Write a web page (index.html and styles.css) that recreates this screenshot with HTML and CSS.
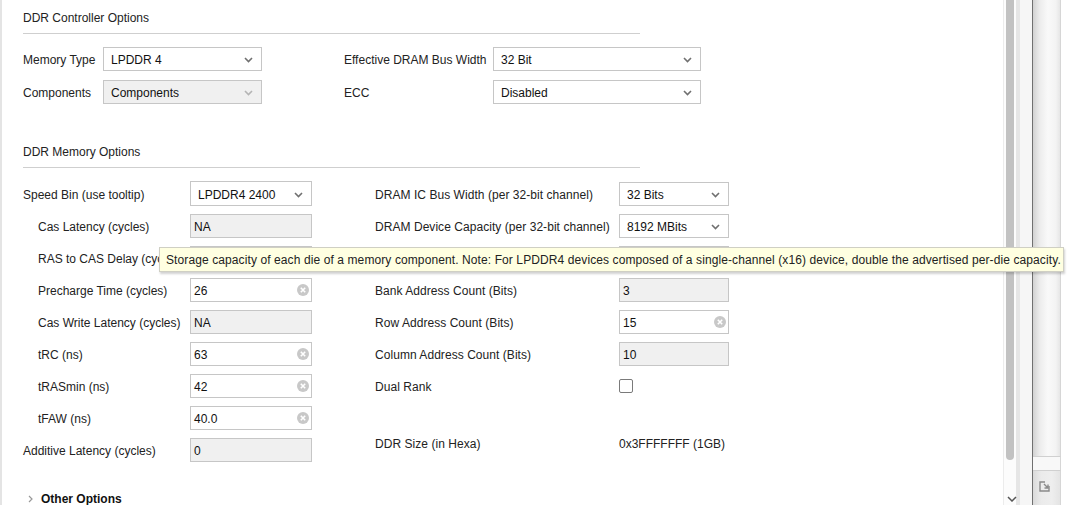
FILE: index.html
```html
<!DOCTYPE html>
<html>
<head>
<meta charset="utf-8">
<link rel="stylesheet" href="styles.css">
</head>
<body>
<div class="app">
  <div class="main">
    <section class="group">
      <div class="group-title">DDR Controller Options</div>
      <div class="ctrl-grid">
        <div class="field-label">Memory Type</div>
        <div class="select"><span>LPDDR 4</span><svg class="chev" viewBox="0 0 9 6"><path d="M1 1 L4.5 4.5 L8 1"/></svg></div>
        <div></div>
        <div class="field-label">Effective DRAM Bus Width</div>
        <div class="select"><span>32 Bit</span><svg class="chev" viewBox="0 0 9 6"><path d="M1 1 L4.5 4.5 L8 1"/></svg></div>

        <div class="field-label">Components</div>
        <div class="select disabled"><span>Components</span><svg class="chev" viewBox="0 0 9 6"><path d="M1 1 L4.5 4.5 L8 1"/></svg></div>
        <div></div>
        <div class="field-label">ECC</div>
        <div class="select"><span>Disabled</span><svg class="chev" viewBox="0 0 9 6"><path d="M1 1 L4.5 4.5 L8 1"/></svg></div>
      </div>
    </section>

    <section class="group group-mem">
      <div class="group-title">DDR Memory Options</div>
      <div class="mem">
        <div class="mem-left">
          <div class="row first">
            <div class="lbl">Speed Bin (use tooltip)</div>
            <div class="select sel-left"><span>LPDDR4 2400</span><svg class="chev" viewBox="0 0 9 6"><path d="M1 1 L4.5 4.5 L8 1"/></svg></div>
          </div>
          <div class="row">
            <div class="lbl ind">Cas Latency (cycles)</div>
            <div class="input disabled">NA</div>
          </div>
          <div class="row">
            <div class="lbl ind">RAS to CAS Delay (cycles)</div>
            <div class="input"></div>
          </div>
          <div class="row">
            <div class="lbl ind">Precharge Time (cycles)</div>
            <div class="input">26<svg class="clear" viewBox="0 0 12 12"><circle cx="6" cy="6" r="6"/><path d="M3.8 3.8 L8.2 8.2 M8.2 3.8 L3.8 8.2"/></svg></div>
          </div>
          <div class="row">
            <div class="lbl ind">Cas Write Latency (cycles)</div>
            <div class="input disabled">NA</div>
          </div>
          <div class="row">
            <div class="lbl ind">tRC (ns)</div>
            <div class="input">63<svg class="clear" viewBox="0 0 12 12"><circle cx="6" cy="6" r="6"/><path d="M3.8 3.8 L8.2 8.2 M8.2 3.8 L3.8 8.2"/></svg></div>
          </div>
          <div class="row">
            <div class="lbl ind">tRASmin (ns)</div>
            <div class="input">42<svg class="clear" viewBox="0 0 12 12"><circle cx="6" cy="6" r="6"/><path d="M3.8 3.8 L8.2 8.2 M8.2 3.8 L3.8 8.2"/></svg></div>
          </div>
          <div class="row">
            <div class="lbl ind">tFAW (ns)</div>
            <div class="input">40.0<svg class="clear" viewBox="0 0 12 12"><circle cx="6" cy="6" r="6"/><path d="M3.8 3.8 L8.2 8.2 M8.2 3.8 L3.8 8.2"/></svg></div>
          </div>
          <div class="row">
            <div class="lbl">Additive Latency (cycles)</div>
            <div class="input disabled">0</div>
          </div>
        </div>

        <div class="mem-right">
          <div class="row first">
            <div class="rlbl">DRAM IC Bus Width (per 32-bit channel)</div>
            <div class="select sel-right"><span>32 Bits</span><svg class="chev" viewBox="0 0 9 6"><path d="M1 1 L4.5 4.5 L8 1"/></svg></div>
          </div>
          <div class="row">
            <div class="rlbl">DRAM Device Capacity (per 32-bit channel)</div>
            <div class="select sel-right"><span>8192 MBits</span><svg class="chev" viewBox="0 0 9 6"><path d="M1 1 L4.5 4.5 L8 1"/></svg></div>
          </div>
          <div class="row">
            <div class="rlbl"></div>
            <div class="input rin disabled"></div>
          </div>
          <div class="row">
            <div class="rlbl">Bank Address Count (Bits)</div>
            <div class="input rin disabled">3</div>
          </div>
          <div class="row">
            <div class="rlbl">Row Address Count (Bits)</div>
            <div class="input rin">15<svg class="clear" viewBox="0 0 12 12"><circle cx="6" cy="6" r="6"/><path d="M3.8 3.8 L8.2 8.2 M8.2 3.8 L3.8 8.2"/></svg></div>
          </div>
          <div class="row">
            <div class="rlbl">Column Address Count (Bits)</div>
            <div class="input rin disabled">10</div>
          </div>
          <div class="row">
            <div class="rlbl">Dual Rank</div>
            <div class="checkbox"></div>
          </div>
          <div class="row size-row">
            <div class="rlbl">DDR Size (in Hexa)</div>
            <div class="value">0x3FFFFFFF (1GB)</div>
          </div>
        </div>
      </div>
    </section>

    <div class="other">
      <svg class="other-chev" viewBox="0 0 5 8"><path d="M1 1 L4 4 L1 7"/></svg>
      <span>Other Options</span>
    </div>
  </div>

  <div class="vscroll">
    <div class="thumb"></div>
    <svg class="down" viewBox="0 0 10 6"><path d="M1 1 L5 5 L9 1"/></svg>
  </div>
  <div class="strip"></div>
  <div class="gutter"></div>
  <div class="divider"></div>
  <div class="side">
    <div class="side-top"></div>
    <div class="side-gap"></div>
    <div class="side-bottom">
      <svg class="popout" viewBox="0 0 11 11"><path d="M6 1 H1 V10 H10 V5"/><path d="M5 3 L9 7 M9 3.5 V7 H5.5"/></svg>
    </div>
  </div>
  <div class="edge"></div>

  <div class="tooltip">Storage capacity of each die of a memory component. Note: For LPDDR4 devices composed of a single-channel (x16) device, double the advertised per-die capacity.</div>
</div>
</body>
</html>
```

FILE: styles.css
```css
* { box-sizing: border-box; }
html, body { margin: 0; padding: 0; background: #fff; }
body {
  font-family: "Liberation Sans", Arial, sans-serif;
  font-size: 12px;
  color: #222;
  width: 1069px;
  height: 505px;
  overflow: hidden;
}
.app {
  position: relative;
  display: flex;
  height: 505px;
}
.main {
  width: 1003px;
  flex: none;
  border-left: 2px solid #e4e4e4;
  padding-left: 21px;
}
.group-title {
  width: 617px;
  padding: 11px 0 8px;
  line-height: 14px;
  border-bottom: 1px solid #cfcfcf;
}
.ctrl-grid {
  display: grid;
  grid-template-columns: 80px 159px 82px 149px 208px;
  grid-auto-rows: 24px;
  row-gap: 9px;
  margin-top: 13px;
}
.field-label {
  display: flex;
  align-items: center;
  white-space: nowrap;
  padding-top: 2px;
}
.select {
  display: flex;
  align-items: center;
  justify-content: space-between;
  border: 1px solid #c6c6c6;
  background: #fff;
  padding: 2px 8px 0 7px;
  color: #111;
}
.select.disabled { background: #f0f0f0; }
.chev {
  width: 9px;
  height: 6px;
  fill: none;
  stroke: #707070;
  stroke-width: 1.6;
}
.select.disabled .chev { stroke: #b4b4b4; }

.group-mem { margin-top: 30px; }
.mem {
  display: flex;
  margin-top: 13px;
}
.mem-left {
  width: 289px;
  display: flex;
  flex-direction: column;
  gap: 8px;
}
.mem-right {
  width: 354px;
  margin-left: 63px;
  display: flex;
  flex-direction: column;
  gap: 8px;
}
.row {
  display: flex;
  align-items: center;
  height: 24px;
}
.row.first { height: 25px; }
.lbl {
  width: 167px;
  white-space: nowrap;
  padding-top: 2px;
}
.lbl.ind { padding-left: 15px; }
.rlbl {
  width: 244px;
  white-space: nowrap;
  padding-top: 2px;
  letter-spacing: 0.05px;
}
.sel-left { width: 122px; height: 25px; }
.sel-right { width: 110px; height: 24px; }
.input {
  position: relative;
  width: 122px;
  height: 24px;
  border: 1px solid #c6c6c6;
  background: #fff;
  padding: 2px 0 0 3px;
  display: flex;
  align-items: center;
  color: #111;
}
.input.rin { width: 110px; }
.input.disabled { background: #f0f0f0; }
.clear {
  position: absolute;
  right: 2px;
  top: 5px;
  width: 12px;
  height: 12px;
}
.clear circle { fill: #c8c8c8; }
.clear path { stroke: #fff; stroke-width: 1.6; fill: none; }
.checkbox {
  width: 14px;
  height: 14px;
  border: 1px solid #7a7a7a;
  border-radius: 2px;
  background: #fff;
}
.size-row { margin-top: 25px; }
.value { color: #222; padding-top: 2px; }

.other {
  display: flex;
  align-items: center;
  margin-top: 30px;
  padding-left: 5px;
  height: 14px;
  font-weight: bold;
  color: #111;
}
.other-chev {
  width: 5px;
  height: 8px;
  fill: none;
  stroke: #999;
  stroke-width: 1.2;
  margin-right: 8px;
}

.vscroll {
  position: relative;
  width: 13px;
  flex: none;
  border-left: 1px solid #ececec;
  background: #fcfcfc;
}
.thumb {
  margin-left: 2px;
  width: 8px;
  height: 460px;
  background: #c2c2c2;
  border-radius: 0 0 4px 4px;
}
.down {
  position: absolute;
  left: 3px;
  bottom: 3px;
  width: 10px;
  height: 6px;
  fill: none;
  stroke: #555;
  stroke-width: 1.5;
}
.strip { width: 4px; flex: none; background: #e6e6e6; }
.gutter { width: 12px; flex: none; background: #f6f6f6; }
.divider { width: 1px; flex: none; background: #707070; }
.side {
  width: 28px;
  flex: none;
  display: flex;
  flex-direction: column;
}
.side-top {
  height: 457px;
  background: linear-gradient(to right, #d2d2d2 0%, #ececec 25%, #f9f9f9 55%, #f3f3f3 85%, #e6e6e6 100%);
  border-right: 1px solid #d6d6d6;
  border-bottom: 1px solid #d0d0d0;
}
.side-gap {
  height: 13px;
  background: #f8f8f8;
  border-right: 1px solid #d6d6d6;
}
.side-bottom {
  flex: 1;
  background: linear-gradient(to right, #dadada 0%, #ebebeb 30%, #eeeeee 70%, #e4e4e4 100%);
  border-top: 1px solid #d0d0d0;
  border-right: 1px solid #d6d6d6;
  padding: 10px 0 0 6px;
}
.popout {
  display: block;
  width: 11px;
  height: 11px;
  fill: none;
  stroke: #8a8a8a;
  stroke-width: 1.4;
}
.edge { flex: 1; background: #fff; }

.tooltip {
  position: absolute;
  left: 159px;
  top: 247px;
  width: 905px;
  height: 25px;
  background: #ffffe1;
  border: 1px solid #cfcfc4;
  box-shadow: 1px 2px 2px rgba(0, 0, 0, 0.18);
  padding: 1px 0 0 6px;
  line-height: 23px;
  color: #222;
  white-space: nowrap;
  letter-spacing: 0.1px;
}
```
